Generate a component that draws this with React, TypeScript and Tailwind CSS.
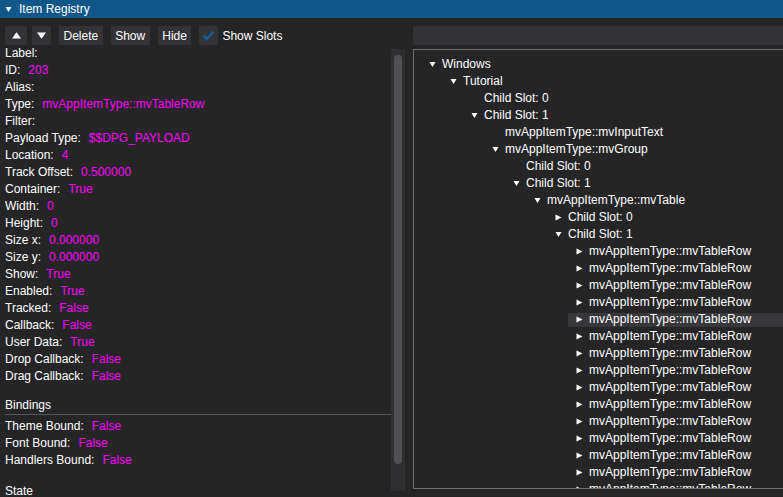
import React from 'react'

type Field = [string, string]

const fields: Field[] = [
  ['Label:', ''],
  ['ID:', '203'],
  ['Alias:', ''],
  ['Type:', 'mvAppItemType::mvTableRow'],
  ['Filter:', ''],
  ['Payload Type:', '$$DPG_PAYLOAD'],
  ['Location:', '4'],
  ['Track Offset:', '0.500000'],
  ['Container:', 'True'],
  ['Width:', '0'],
  ['Height:', '0'],
  ['Size x:', '0.000000'],
  ['Size y:', '0.000000'],
  ['Show:', 'True'],
  ['Enabled:', 'True'],
  ['Tracked:', 'False'],
  ['Callback:', 'False'],
  ['User Data:', 'True'],
  ['Drop Callback:', 'False'],
  ['Drag Callback:', 'False'],
]

const bindings: Field[] = [
  ['Theme Bound:', 'False'],
  ['Font Bound:', 'False'],
  ['Handlers Bound:', 'False'],
]

type Arrow = 'down' | 'right' | null
type Node = [number, Arrow, string]

const tree: Node[] = [
  [0, 'down', 'Windows'],
  [1, 'down', 'Tutorial'],
  [2, null, 'Child Slot: 0'],
  [2, 'down', 'Child Slot: 1'],
  [3, null, 'mvAppItemType::mvInputText'],
  [3, 'down', 'mvAppItemType::mvGroup'],
  [4, null, 'Child Slot: 0'],
  [4, 'down', 'Child Slot: 1'],
  [5, 'down', 'mvAppItemType::mvTable'],
  [6, 'right', 'Child Slot: 0'],
  [6, 'down', 'Child Slot: 1'],
  ...Array.from({ length: 15 }, (): Node => [7, 'right', 'mvAppItemType::mvTableRow']),
]

// indentation per tree level (21px steps)
const indent = ['pl-[15px]', 'pl-[36px]', 'pl-[57px]', 'pl-[78px]', 'pl-[99px]', 'pl-[120px]', 'pl-[141px]', 'pl-[162px]']

function Tri({ dir }: { dir: 'down' | 'right' | 'up' }) {
  if (dir === 'down')
    return (
      <svg width="7" height="7" viewBox="0 0 7 7" className="block">
        <polygon points="0.5,1 6.5,1 3.5,6" fill="#ffffff" />
      </svg>
    )
  if (dir === 'up')
    return (
      <svg width="9" height="7" viewBox="0 0 9 7" className="block">
        <polygon points="4.5,0.3 9,6.5 0,6.5" fill="#ffffff" />
      </svg>
    )
  return (
    <svg width="7" height="7" viewBox="0 0 7 7" className="block">
      <polygon points="0.5,0.5 6.5,3.5 0.5,6.5" fill="#ffffff" />
    </svg>
  )
}

function Row({ label, value }: { label: string; value: string }) {
  return (
    <div className="flex h-[17px] items-center gap-[8px] whitespace-nowrap leading-[17px]">
      <span>{label}</span>
      {value && <span className="text-[#ff00ff]">{value}</span>}
    </div>
  )
}

function Button({ children }: { children: React.ReactNode }) {
  return (
    <div className="flex h-[19px] items-center justify-center bg-[#333337] px-[4.5px]">{children}</div>
  )
}

export default function App() {
  return (
    <div
      className="flex h-[497px] w-[783px] flex-col overflow-hidden bg-[#252526] text-[12px] text-white"
      style={{ fontFamily: '"Liberation Sans", Arial, sans-serif' }}
    >
      {/* Title bar */}
      <div className="flex h-[18px] shrink-0 items-center gap-[7px] bg-[#0f5789] pl-[5px]">
        <Tri dir="down" />
        <span className="leading-[18px]">Item Registry</span>
      </div>

      <div className="flex min-h-0 flex-1 gap-[8px] pl-[5px] pt-[8px]">
        {/* Left column */}
        <div className="flex w-[400px] shrink-0 flex-col">
          <div className="flex h-[19px] shrink-0 items-center">
            <div className="flex h-[19px] w-[22px] items-center justify-center bg-[#333337]">
              <Tri dir="up" />
            </div>
            <div className="ml-[5px] flex h-[19px] w-[19px] items-center justify-center bg-[#333337]">
              <div className="rotate-180">
                <Tri dir="up" />
              </div>
            </div>
            <div className="ml-[8px] flex items-center gap-[8px]">
              <Button>Delete</Button>
              <Button>Show</Button>
              <Button>Hide</Button>
              <div className="flex items-center gap-[4px]">
                <div className="flex h-[19px] w-[19px] items-center justify-center bg-[#333337]">
                  <svg width="13" height="11" viewBox="0 0 13 11">
                    <polyline points="1.5,5.5 4.8,9 11.5,1.5" fill="none" stroke="#15609a" strokeWidth="2.4" />
                  </svg>
                </div>
                <span>Show Slots</span>
              </div>
            </div>
          </div>

          <div className="flex min-h-0 flex-1">
            <div className="min-w-0 flex-1 overflow-hidden">
              {fields.map(([l, v], i) => (
                <Row key={i} label={l} value={v} />
              ))}
              <div className="mt-[12px]">
                <Row label="Bindings" value="" />
              </div>
              <div className="h-px bg-[#57575b]" />
              <div className="mt-[3px]">
                {bindings.map(([l, v], i) => (
                  <Row key={i} label={l} value={v} />
                ))}
              </div>
              <div className="mt-[14px]">
                <Row label="State" value="" />
              </div>
            </div>
            <div className="mt-[4px] h-[442px] w-[14px] shrink-0 bg-[#2f2f32] pl-[3px] pt-[6px]">
              <div className="h-[409px] w-[8px] rounded-full bg-[#505053]" />
            </div>
          </div>
        </div>

        {/* Right column */}
        <div className="flex min-w-0 flex-1 flex-col">
          <div className="h-[19px] shrink-0 bg-[#333337]" />
          <div className="mt-[4px] h-[440px] shrink-0 overflow-hidden border-b border-l border-t border-[#6e6e6e] pt-[6px]">
            {tree.map(([level, arrow, text], i) => (
              <div key={i} className={`relative flex h-[17px] items-center whitespace-nowrap leading-[17px] ${indent[level]}`}>
                {i === 15 && <div className="absolute left-[154px] right-0 top-[1.5px] h-[14px] bg-[#38383c]" />}
                <div className="relative w-[13px] shrink-0">{arrow && <Tri dir={arrow} />}</div>
                <span className="relative">{text}</span>
              </div>
            ))}
          </div>
        </div>
      </div>
    </div>
  )
}
